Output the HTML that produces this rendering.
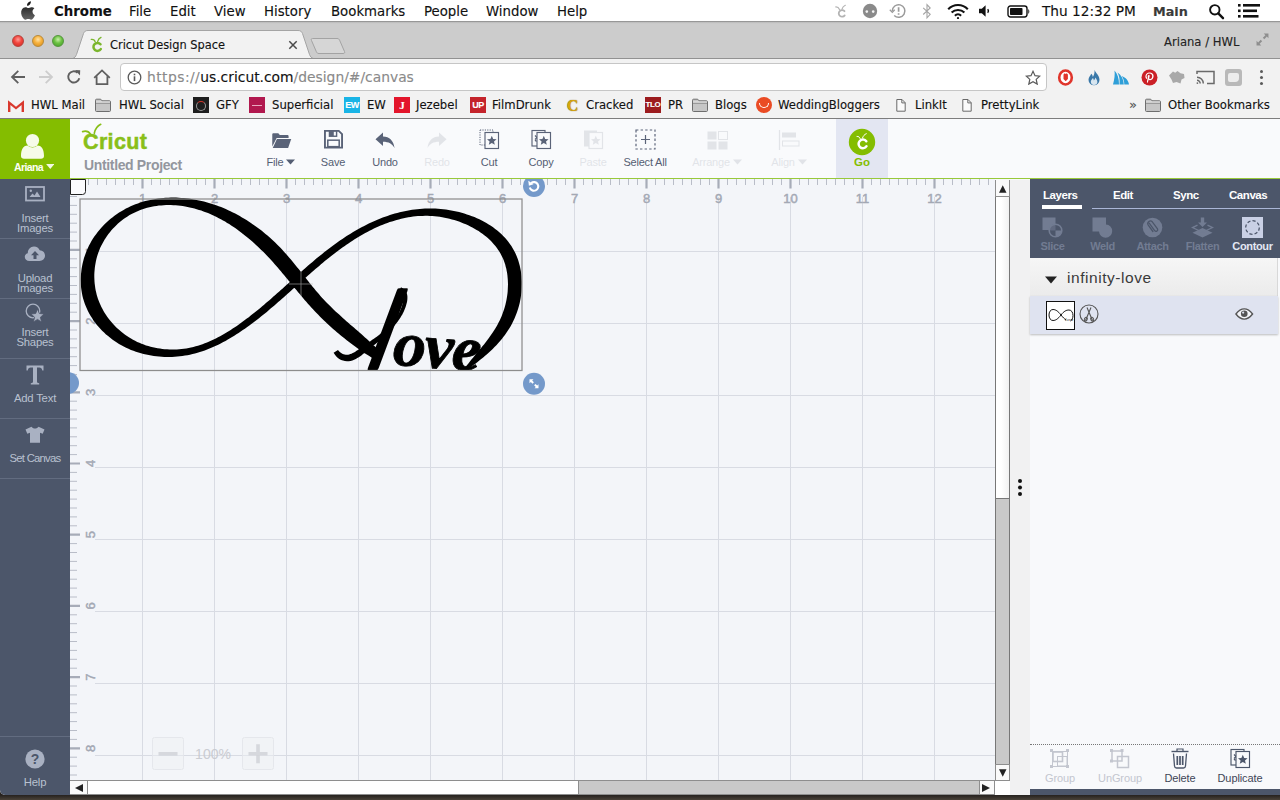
<!DOCTYPE html>
<html lang="en">
<head>
<meta charset="utf-8">
<title>Cricut Design Space</title>
<style>
*{box-sizing:border-box;margin:0;padding:0}
html,body{width:1280px;height:800px;overflow:hidden;background:linear-gradient(#26221f 0,#26221f 795px,#4a4239 800px)}
body{position:relative;font-family:"Liberation Sans",sans-serif;color:#000}
.abs{position:absolute}
.mac{font-family:"DejaVu Sans","Liberation Sans",sans-serif;-webkit-text-stroke:.12px currentColor}
/* ---------- mac menu bar ---------- */
#menubar{position:absolute;left:0;top:0;width:1280px;height:22px;background:#fff;border-bottom:1px solid #979797}
#menubar span{position:absolute;top:3px;font-size:13.300px;line-height:17px;white-space:nowrap;color:#111}
/* ---------- chrome window ---------- */
#tabbar{position:absolute;left:0;top:22px;width:1280px;height:37px;background:#cccccc}
#toolbar{position:absolute;left:0;top:58px;width:1280px;height:60px;background:#f2f2f2;border-top:1px solid #929292}
#urlbox{position:absolute;left:120px;top:4px;width:927px;height:28px;background:#fff;border:1px solid #c6c6c6;border-radius:4px}
.bm{position:absolute;top:38px;font-size:11.650px;line-height:16px;white-space:nowrap;color:#111}
/* ---------- app ---------- */
#app{position:absolute;left:0;top:118px;width:1280px;height:677px;background:#f8f9fb;overflow:hidden;border-top:1px solid #7d7d7d;border-bottom-left-radius:5px}
#side{position:absolute;left:0;top:0;width:70px;height:677px;background:#4c566a;border-bottom-left-radius:5px}
#user{position:absolute;left:0;top:0;width:70px;height:60px;background:#84bd00}
.sitem{position:absolute;left:0;width:70px;text-align:center;color:#b9c1d0;font-size:11.300px;line-height:10px;letter-spacing:-.2px}
.ssep{position:absolute;left:0;width:70px;height:1px;background:#626c80}
#top{position:absolute;left:70px;top:0;width:1210px;height:59px;background:#f9fafc}
#greenline{position:absolute;left:70px;top:59px;width:1210px;height:1px;background:#98c93a}
.tb{position:absolute;top:0;height:60px;text-align:center;color:#555e73;font-size:11px;letter-spacing:-.2px}
.tb .lbl{position:absolute;left:-20px;right:-20px;top:36px;line-height:14px;white-space:nowrap}
.tb.dis{opacity:.14}
#canvas{position:absolute;left:70px;top:60px;width:925px;height:601px;background:#f3f5f9;overflow:hidden}
#panel{position:absolute;left:1030px;top:60px;width:250px;height:617px;background:#f8f9fb}
#phead{position:absolute;left:0;top:0;width:250px;height:79px;background:#4c566a}
</style>
</head>
<body>
<div id="menubar" class="mac">
<svg class="abs" style="left:18px;top:.5px" width="18.500" height="20.500" viewBox="0 0 16 18"><defs><linearGradient id="apg" x1="0" y1="0" x2="0" y2="1"><stop offset="0" stop-color="#111"/><stop offset="1" stop-color="#666"/></linearGradient></defs><path fill="url(#apg)" d="M11.2 0.3c.1 1-.3 2-.9 2.700-.6.700-1.600 1.300-2.500 1.200-.1-1 .4-2 .9-2.600C9.300.9 10.400.4 11.200.3zM14.300 6.300c-.1.100-1.700 1-1.700 3 0 2.400 2.100 3.200 2.100 3.200s-.3 1-1 2c-.6.900-1.300 1.900-2.300 1.900s-1.300-.6-2.500-.6-1.600.6-2.500.6c-1 0-1.700-.9-2.400-1.900C2.700 12.600 2 9.400 3.400 7.200c.7-1.100 1.900-1.800 3.100-1.800 1 0 1.900.7 2.500.7.600 0 1.700-.8 2.900-.7.500 0 1.700.2 2.400.9z"/></svg>
<span style="left:54px;font-weight:bold">Chrome</span>
<span style="left:129px">File</span>
<span style="left:170px">Edit</span>
<span style="left:214px">View</span>
<span style="left:264px">History</span>
<span style="left:331px">Bookmarks</span>
<span style="left:424px">People</span>
<span style="left:486px">Window</span>
<span style="left:557px">Help</span>
<!-- status icons -->
<svg class="abs" style="left:832px;top:3px" width="18" height="16" viewBox="0 0 18 16" fill="none" stroke="#b3b3b3" stroke-width="1.800" stroke-linecap="round"><path d="M12.500 8.200a3.300 3.300 0 1 0 .2 4.200"/><path d="M7.500 6.500C6.800 4.800 5.500 3.800 3.800 3.900" stroke-width="1.200"/><path d="M10 6.200c.5-1.800 1.600-3.200 3.300-3.900" stroke-width="1.200"/></svg>
<svg class="abs" style="left:862px;top:3px" width="16" height="16" viewBox="0 0 16 16"><circle cx="8" cy="8" r="7.200" fill="#8a8a8a"/><circle cx="4.800" cy="8.600" r="1.300" fill="#f4f4f4"/><circle cx="11.200" cy="8.600" r="1.300" fill="#f4f4f4"/></svg>
<svg class="abs" style="left:889px;top:3px" width="18" height="16" viewBox="0 0 18 16" fill="none" stroke="#9a9a9a" stroke-width="1.500"><path d="M3.300 8a6.300 6.300 0 1 1 1.900 4.500"/><path d="M0.800 6.800l2.500 2.600 2.400-2.700" stroke-width="1.300"/><path d="M9.600 4.200v4.600M9.600 10.300v1.500" stroke-width="1.700"/></svg>
<svg class="abs" style="left:922px;top:3px" width="10" height="17" viewBox="0 0 10 17" fill="none" stroke="#a5a5a5" stroke-width="1.100"><path d="M1.200 4.800l7 6.500L5 14.800V1.600l3.200 3.400-7 6.500"/></svg>
<svg class="abs" style="left:947px;top:3px" width="22" height="16" viewBox="0 0 22 16" fill="none" stroke="#111" stroke-width="2.100" stroke-linecap="butt"><path d="M1.200 6.200a13.500 13.500 0 0 1 19.600 0"/><path d="M4.600 9.600a9 9 0 0 1 12.800 0"/><path d="M7.900 12.700a4.400 4.400 0 0 1 6.200 0"/><circle cx="11" cy="15" r="1.100" fill="#111" stroke="none"/></svg>
<svg class="abs" style="left:978px;top:4px" width="14" height="14" viewBox="0 0 14 14"><path fill="#111" d="M1 4.800h2.800L7.600 1.300v11.400L3.800 9.200H1z"/><path d="M9.600 5.200a2.600 2.600 0 0 1 0 3.600" stroke="#111" stroke-width="1.300" fill="none"/></svg>
<svg class="abs" style="left:1007px;top:5px" width="24" height="13" viewBox="0 0 24 13"><rect x="1" y="1" width="19" height="11" rx="2.400" fill="none" stroke="#111" stroke-width="1.400"/><rect x="3" y="3" width="12.500" height="7" rx=".8" fill="#111"/><path d="M21.300 4.300c1.300.3 1.300 4.100 0 4.400z" fill="#111"/></svg>
<span style="left:1042px;font-size:13.700px">Thu 12:32 PM</span>
<span style="left:1153px;font-weight:bold;color:#3a3a3a;font-size:12.800px">Main</span>
<svg class="abs" style="left:1208px;top:3px" width="17" height="17" viewBox="0 0 17 17" fill="none" stroke="#111" stroke-width="1.900"><circle cx="6.800" cy="6.800" r="4.700"/><path d="M10.300 10.300l4.700 4.900" stroke-width="2.400" stroke-linecap="round"/></svg>
<svg class="abs" style="left:1238px;top:4px" width="22" height="14" viewBox="0 0 22 14" fill="#111"><rect x="0" y="0" width="2.600" height="2.600"/><rect x="0" y="5.500" width="2.600" height="2.600"/><rect x="0" y="11" width="2.600" height="2.600"/><rect x="5" y="0" width="17" height="2.600"/><rect x="5" y="5.500" width="14" height="2.600"/><rect x="5" y="11" width="15.500" height="2.600"/></svg>
</div>
<div id="tabbar" class="mac">
<div class="abs" style="left:0;top:0;width:1280px;height:1.500px;background:linear-gradient(#b9b9b9,#cfcfcf)"></div>
<!-- traffic lights -->
<div class="abs" style="left:12px;top:13px;width:12px;height:12px;border-radius:50%;background:radial-gradient(circle at 50% 35%,#ff9c96 0,#f2453d 45%,#c92a24 100%);border:.5px solid #b5433d"></div>
<div class="abs" style="left:32px;top:13px;width:12px;height:12px;border-radius:50%;background:radial-gradient(circle at 50% 35%,#ffe3a6 0,#f7b13c 45%,#d08a1c 100%);border:.5px solid #b98a3a"></div>
<div class="abs" style="left:52px;top:13px;width:12px;height:12px;border-radius:50%;background:radial-gradient(circle at 50% 35%,#c9f0a8 0,#6cc243 45%,#3f9a26 100%);border:.5px solid #55963e"></div>
<!-- active tab -->
<svg class="abs" style="left:66px;top:7px" width="290" height="30" viewBox="0 0 290 30"><path d="M0 30 L6.500 29.500 C9 29 9.500 27.500 10.500 25.500 L17.500 4.500 C18.500 2.300 19.500 1.500 22 1.500 H232 C234.500 1.500 235.500 2.300 236.500 4.500 L243.500 25.500 C244.500 27.500 245 29 247.500 29.500 L254 30 Z" fill="#f2f2f2" stroke="#a4a4a4" stroke-width="1"/><rect x="7" y="29" width="240" height="1.500" fill="#f2f2f2"/>
</svg>
<svg class="abs" style="left:308px;top:15px" width="40" height="19" viewBox="0 0 40 19"><path d="M4.500 1.500 H29 C30.500 1.500 31 2 31.600 3.200 L36.500 14.500 C37 15.800 36.500 16.500 35 16.500 H11 C9.500 16.500 9 16 8.400 14.800 L3.500 3.500 C3 2.200 3.200 1.500 4.500 1.500Z" fill="#d6d6d6" stroke="#a3a3a3" stroke-width="1"/></svg>
<svg class="abs" style="left:89px;top:13px" width="16" height="18" viewBox="0 0 16 18" fill="none" stroke="#7bb62d" stroke-linecap="round"><path d="M11.500 9.300a4 4 0 1 0 .3 4.800" stroke-width="2.500"/><path d="M6.300 7.200C5.800 5.300 4.300 4.200 2.300 4.400" stroke-width="1.300"/><path d="M8.600 6.600c.5-2 1.700-3.400 3.400-4.200" stroke-width="1.300"/></svg>
<span class="abs" style="left:110px;top:14.500px;font-size:11.400px;line-height:16px;white-space:nowrap;color:#111">Cricut Design Space</span>
<svg class="abs" style="left:288px;top:18px" width="10" height="10" viewBox="0 0 10 10" stroke="#4a4a4a" stroke-width="1.500"><path d="M1.300 1.300l7.400 7.400M8.700 1.300L1.300 8.700"/></svg>
<span class="abs" style="left:1164px;top:12px;font-size:11.600px;line-height:16px;white-space:nowrap;color:#222">Ariana / HWL</span>
<svg class="abs" style="left:1254px;top:9px" width="18" height="18" viewBox="0 0 18 18" fill="#8e8e8e"><path d="M10.500 2h5.500v5.500l-1.900-1.900-3 3-1.700-1.700 3-3zM7.500 16H2v-5.500l1.900 1.900 3-3 1.700 1.700-3 3z" transform="scale(.85) translate(1,1)"/></svg>
</div>
<div id="toolbar" class="mac">
<!-- nav -->
<svg class="abs" style="left:10px;top:10px" width="16" height="16" viewBox="0 0 16 16" fill="none" stroke="#5f5f5f" stroke-width="1.800"><path d="M8.300 1.800L2 8l6.300 6.200M2.200 8H15"/></svg>
<svg class="abs" style="left:38px;top:10px" width="16" height="16" viewBox="0 0 16 16" fill="none" stroke="#cdcdcd" stroke-width="1.800"><path d="M7.700 1.800L14 8l-6.300 6.200M13.800 8H1"/></svg>
<svg class="abs" style="left:66px;top:10px" width="16" height="16" viewBox="0 0 16 16" fill="none" stroke="#5f5f5f" stroke-width="1.900"><path d="M13.300 9.200A5.600 5.600 0 1 1 11.600 3.700"/><path d="M9 1l5.200.2-.2 5.200z" fill="#5f5f5f" stroke="none"/></svg>
<svg class="abs" style="left:93px;top:10px" width="18" height="17" viewBox="0 0 18 17" fill="none" stroke="#5f5f5f" stroke-width="1.800"><path d="M1.200 8.800L9 1.400l7.800 7.400"/><path d="M3.600 7.200v8h10.800v-8"/></svg>
<div id="urlbox">
<svg class="abs" style="left:6px;top:6px" width="15" height="15" viewBox="0 0 15 15"><circle cx="7.500" cy="7.500" r="6.300" fill="none" stroke="#5a5a5a" stroke-width="1.300"/><rect x="6.700" y="6.300" width="1.600" height="4.800" fill="#5a5a5a"/><rect x="6.700" y="3.700" width="1.600" height="1.600" fill="#5a5a5a"/></svg>
<span class="abs" style="left:26px;top:4px;font-size:13.850px;line-height:18px;white-space:nowrap;color:#8a8a8a"><span style="letter-spacing:.45px">https://</span><span style="color:#111">us.cricut.com</span>/design/#/canvas</span>
<svg class="abs" style="left:904px;top:6px" width="16" height="15" viewBox="0 0 16 15"><path d="M8 1.300l2 4.400 4.700.5-3.500 3.200 1 4.700L8 11.700 3.800 14.100l1-4.700L1.300 6.200 6 5.700z" fill="none" stroke="#5a5a5a" stroke-width="1.200" stroke-linejoin="miter"/></svg>
</div>
<!-- extensions -->
<svg class="abs" style="left:1057px;top:10px" width="17" height="17" viewBox="0 0 17 17"><ellipse cx="8.500" cy="8.500" rx="6.300" ry="7" fill="#fff" stroke="#e0352b" stroke-width="2.600"/><path d="M6.500 5.500l1.200-1.300 1 .9 1-.9 1.200 1.300v4.500l-2.200 2.300-2.200-2.300z" fill="#e0352b"/></svg>
<svg class="abs" style="left:1087px;top:10px" width="14" height="17" viewBox="0 0 14 17"><path d="M7.500.8C8.500 4 12.500 6.500 12.500 10.800a5.500 5.500 0 0 1-11 0C1.500 8 3.500 6.800 4.200 4.800 5.500 6 5.800 7 5.800 8 7.300 6 7.800 3.200 7.500.8z" fill="#3a78a8"/><path d="M7 16c-2 0-3.200-1.400-3.200-3.200 0-1.600 1.400-2.400 2-3.800.8.800 1 1.600 1 2.400 1-.8 1.400-2 1.400-3 1.200 1.400 2.200 2.800 2.200 4.500C10.400 14.600 9 16 7 16z" fill="#d8e6f0"/></svg>
<svg class="abs" style="left:1112px;top:10px" width="18" height="17" viewBox="0 0 18 17" fill="#2f9fd8"><path d="M1 15.500C2.500 10 3 5.500 2.500 1.500c3 3.500 4.500 8 4.500 14z"/><path d="M7.500 15.500c.5-5-.2-8.500-2-12C9.500 6 11.500 10 11.800 15.500z"/><path d="M12.300 15.500c0-3.500-.8-6-2.500-8.500 4 1.500 6.700 4.500 7.200 8.500z"/></svg>
<svg class="abs" style="left:1141px;top:10px" width="17" height="17" viewBox="0 0 17 17"><circle cx="8.500" cy="8.500" r="8" fill="#cb2027"/><path d="M8.700 3.600c-2.800 0-4.300 1.900-4.300 3.900 0 .9.500 2.100 1.300 2.500.2.100.2 0 .3-.2l.2-.7c0-.1 0-.2-.1-.3-.3-.3-.5-.9-.5-1.500 0-1.400 1.100-2.800 2.900-2.800 1.600 0 2.700 1.100 2.700 2.600 0 1.800-.9 3-2 3-.6 0-1.100-.5-1-1.200.2-.8.500-1.600.5-2.100 0-.5-.3-.9-.8-.9-.7 0-1.200.7-1.200 1.600 0 .6.200 1 .2 1l-.8 3.300c-.2 1 0 2.200 0 2.300 0 .1.100.1.100 0 .1-.1.900-1.100 1.100-2.100l.4-1.600c.2.400.9.800 1.500.8 2 0 3.400-1.800 3.400-4.100 0-2.100-1.700-3.500-3.900-3.500z" fill="#fff"/></svg>
<svg class="abs" style="left:1168px;top:11px" width="17" height="15" viewBox="0 0 17 15"><path d="M1 5.500l4-4 2.200 1.200L9.500 1l3 2.200 3.500.8.500 4-3 1.500-1 4-4-1.500-3.500 1-1.500-3.500z" fill="#a9a9a9"/></svg>
<svg class="abs" style="left:1196px;top:11px" width="19" height="15" viewBox="0 0 19 15" fill="none" stroke="#6a6a6a" stroke-width="1.500"><path d="M1 4V1.500h17v12H11"/><path d="M1 7.200a6.300 6.300 0 0 1 6.300 6.300M1 10.300a3.200 3.200 0 0 1 3.200 3.200"/><circle cx="1.400" cy="13.100" r=".9" fill="#6a6a6a" stroke="none"/></svg>
<div class="abs" style="left:1225px;top:10px;width:17px;height:17px;border-radius:3px;background:#b9b9b9"><div class="abs" style="left:3px;top:4px;width:11px;height:9px;border-radius:2px 2px 4px 2px;background:#ededed"></div></div>
<div class="abs" style="left:1260px;top:11px;width:3px;height:3px;border-radius:50%;background:#5a5a5a;box-shadow:0 6px 0 #5a5a5a,0 12px 0 #5a5a5a"></div>
<!-- bookmarks -->
<svg class="abs" style="left:8px;top:40px" width="16" height="13" viewBox="0 0 16 13"><path d="M0 1h16v12h-16z" fill="#f4f4f4"/><path d="M0 1.200L8 7.800l8-6.600V13h-2.400V5.900L8 10.500 2.400 5.900V13H0z" fill="#d9392e"/></svg>
<span class="bm" style="left:31px">HWL Mail</span><svg class="abs" style="left:95px;top:39px" width="16" height="14" viewBox="0 0 16 14"><path d="M.5 2.200c0-.6.400-1 1-1h4.200l1.300 1.600h7.500c.6 0 1 .4 1 1v8.700c0 .6-.4 1-1 1h-13c-.6 0-1-.4-1-1z" fill="#c6c6c6" stroke="#6e6e6e" stroke-width="1"/><path d="M.5 5h15" stroke="#6e6e6e" stroke-width="1" fill="none"/><path d="M1 3.600h14v1h-14z" fill="#f0f0f0"/></svg><span class="bm" style="left:119px">HWL Social</span>
<div class="abs" style="left:193px;top:38px;width:16px;height:16px;background:#1e1e1e"><div class="abs" style="left:3px;top:4px;width:10px;height:10px;border-radius:50%;border:1.500px solid #9a9a9a;border-top-color:#d3362c"></div></div>
<span class="bm" style="left:216px">GFY</span>
<div class="abs" style="left:249px;top:38px;width:16px;height:16px;background:#b1184e"><div class="abs" style="left:3px;top:8px;width:10px;height:1px;background:#e9a9c0"></div></div>
<span class="bm" style="left:272px">Superficial</span>
<div class="abs" style="left:344px;top:38px;width:16px;height:16px;background:#19b4e6;color:#fff;font:bold 9px/16px 'Liberation Sans',sans-serif;text-align:center;letter-spacing:-.5px">EW</div>
<span class="bm" style="left:367px">EW</span>
<div class="abs" style="left:394px;top:38px;width:16px;height:16px;background:#e3152b;color:#fff;font:bold 11px/16px 'Liberation Serif',serif;text-align:center">J</div>
<span class="bm" style="left:416px">Jezebel</span>
<div class="abs" style="left:470px;top:38px;width:16px;height:16px;background:#c4242b;color:#fff;font:bold 9px/16px 'Liberation Sans',sans-serif;text-align:center;letter-spacing:-.5px">UP</div>
<span class="bm" style="left:492px">FilmDrunk</span>
<div class="abs" style="left:566px;top:38px;width:13px;height:17px;color:#d9a60c;font:bold 16px/17px 'Liberation Serif',serif;text-align:center;text-shadow:0 0 1px #5a4300">C</div>
<span class="bm" style="left:586px">Cracked</span>
<div class="abs" style="left:645px;top:38px;width:16px;height:16px;background:#9c1c1f;color:#fff;font:bold 8px/16px 'Liberation Sans',sans-serif;text-align:center;letter-spacing:-.3px">TLO</div>
<span class="bm" style="left:668px">PR</span><svg class="abs" style="left:692px;top:39px" width="16" height="14" viewBox="0 0 16 14"><path d="M.5 2.200c0-.6.400-1 1-1h4.200l1.300 1.600h7.500c.6 0 1 .4 1 1v8.700c0 .6-.4 1-1 1h-13c-.6 0-1-.4-1-1z" fill="#c6c6c6" stroke="#6e6e6e" stroke-width="1"/><path d="M.5 5h15" stroke="#6e6e6e" stroke-width="1" fill="none"/><path d="M1 3.600h14v1h-14z" fill="#f0f0f0"/></svg><span class="bm" style="left:715px">Blogs</span>
<div class="abs" style="left:756px;top:38px;width:16px;height:16px;border-radius:50%;background:#ea4b24"><div class="abs" style="left:3px;top:6px;width:10px;height:5px;border:1.500px solid #fff;border-top:none;border-radius:0 0 5px 5px"></div></div>
<span class="bm" style="left:778px">WeddingBloggers</span><svg class="abs" style="left:896px;top:39px" width="10" height="14" viewBox="0 0 10 14"><path d="M.8 1.500h5.200l3.200 3.200v8.500H.8z" fill="#fafafa" stroke="#6a6a6a" stroke-width="1"/><path d="M5.800 1.500v3.400h3.400" fill="none" stroke="#6a6a6a" stroke-width="1"/></svg><span class="bm" style="left:915px">LinkIt</span><svg class="abs" style="left:962px;top:39px" width="10" height="14" viewBox="0 0 10 14"><path d="M.8 1.500h5.200l3.200 3.200v8.500H.8z" fill="#fafafa" stroke="#6a6a6a" stroke-width="1"/><path d="M5.800 1.500v3.400h3.400" fill="none" stroke="#6a6a6a" stroke-width="1"/></svg><span class="bm" style="left:981px">PrettyLink</span>
<span class="bm" style="left:1129px;color:#555;font-size:13px;top:38px">»</span>
<svg class="abs" style="left:1145px;top:39px" width="16" height="14" viewBox="0 0 16 14"><path d="M.5 2.200c0-.6.400-1 1-1h4.200l1.300 1.600h7.500c.6 0 1 .4 1 1v8.700c0 .6-.4 1-1 1h-13c-.6 0-1-.4-1-1z" fill="#c6c6c6" stroke="#6e6e6e" stroke-width="1"/><path d="M.5 5h15" stroke="#6e6e6e" stroke-width="1" fill="none"/><path d="M1 3.600h14v1h-14z" fill="#f0f0f0"/></svg><span class="bm" style="left:1168px">Other Bookmarks</span>
</div>
<div id="app">
  <div id="side"><div id="user">
<svg class="abs" style="left:19px;top:13px" width="28" height="28" viewBox="0 0 28 28" fill="#f6fbe8"><circle cx="13.500" cy="8.500" r="6.600"/><path d="M2 24c0-6 2-10.500 6.500-10.500 1.500 1.300 3.200 2 5 2s3.500-.7 5-2C23 13.500 25 18 25 24c0 1.800-1.200 2.800-3 2.800H5c-1.800 0-3-1-3-2.800z"/></svg>
<div class="abs" style="left:14px;top:41.500px;font-size:10.500px;line-height:12px;font-weight:bold;color:#fcfef4;letter-spacing:-.6px">Ariana</div>
<svg class="abs" style="left:45.500px;top:45px" width="8.500" height="5.500" viewBox="0 0 9 6"><path d="M0 0h9L4.500 5.500z" fill="#f3f9e2"/></svg>
</div>
<svg class="abs" style="left:25px;top:67px" width="20" height="16" viewBox="0 0 20 16"><rect x="1" y="1" width="18" height="13.500" fill="none" stroke="#a9b1c2" stroke-width="1.800"/><path d="M4.500 11l3-3.500 2 2 2.500-4 3.500 5.500z" fill="#a9b1c2"/><circle cx="5.800" cy="4.800" r="1.200" fill="#a9b1c2"/></svg>
<div class="sitem" style="top:93.5px">Insert<br>Images</div>
<div class="ssep" style="top:119px"></div>
<svg class="abs" style="left:24px;top:126px" width="22" height="17" viewBox="0 0 22 17"><path d="M5.500 16C2.500 16 .8 14.200 .8 12c0-2 1.300-3.400 3-3.800C3.800 4.500 6.300 1.500 10 1.500c2.800 0 4.800 1.500 5.700 3.800 3 .2 5.300 2.300 5.300 5.300 0 3.200-2.400 5.400-5.500 5.400z" fill="#a9b1c2"/><path d="M11 6l4 4.300h-2.500V14h-3v-3.700H7z" fill="#4c566a"/></svg>
<div class="sitem" style="top:153.5px">Upload<br>Images</div>
<div class="ssep" style="top:179px"></div>
<svg class="abs" style="left:23px;top:183px" width="24" height="24" viewBox="0 0 24 24"><circle cx="10" cy="9" r="6.800" fill="none" stroke="#a9b1c2" stroke-width="1.300"/><path d="M14.500 7l1.800 4.500 4.800.5-3.700 3.200 1.200 4.800-4.100-2.600-4.100 2.600 1.200-4.800L7.900 12l4.800-.5z" fill="#a9b1c2" stroke="#4c566a" stroke-width=".8"/></svg>
<div class="sitem" style="top:207.5px">Insert<br>Shapes</div>
<div class="ssep" style="top:239px"></div>
<svg class="abs" style="left:26px;top:246px" width="18" height="20" viewBox="0 0 18 20" fill="#a9b1c2"><path d="M.5.500h17v5h-1.200c-.3-2-1.300-3-3-3h-2.300v14c0 1.200.6 1.700 2.200 1.700v1.300H4.800v-1.300c1.600 0 2.200-.5 2.200-1.700v-14H4.700c-1.700 0-2.700 1-3 3H.5z"/></svg>
<div class="sitem" style="top:273.5px">Add Text</div>
<div class="ssep" style="top:299px"></div>
<svg class="abs" style="left:25px;top:307px" width="20" height="18" viewBox="0 0 20 18" fill="#a9b1c2"><path d="M6.500.8c.8 1.200 2 1.800 3.500 1.800s2.700-.6 3.500-1.800l6 2.700-1.800 4.200-2.700-.9v10H5v-10l-2.700.9L.5 3.500z"/></svg>
<div class="sitem" style="top:333.5px;letter-spacing:-.75px">Set Canvas</div>
<div class="ssep" style="top:359px"></div>
<div class="ssep" style="top:617px"></div>
<svg class="abs" style="left:25px;top:629.500px" width="20" height="20" viewBox="0 0 20 20"><circle cx="10" cy="10" r="9.600" fill="#a9b1c2"/><text x="10" y="15" text-anchor="middle" font-family="'Liberation Sans',sans-serif" font-weight="bold" font-size="14" fill="#4c566a">?</text></svg>
<div class="sitem" style="top:658px">Help</div>
</div>
  <div id="top">
<svg class="abs" style="left:9px;top:1.700px" width="90" height="34" viewBox="0 0 90 34"><path d="M11.500 13.200C9.800 10.500 7 9.600 3.600 10.600" fill="none" stroke="#89bf19" stroke-width="1.700" stroke-linecap="round"/><path d="M15.300 12.200C16.200 8.200 18.300 5 21.700 3.300" fill="none" stroke="#89bf19" stroke-width="1.700" stroke-linecap="round"/><text x="4" y="28.300" font-family="'Liberation Sans',sans-serif" font-weight="bold" font-size="21.500" letter-spacing=".35" fill="#89bf19" stroke="#89bf19" stroke-width=".5">Cricut</text></svg>
<div class="abs" style="left:14px;top:36.500px;font-size:14px;line-height:18px;font-weight:bold;color:#93969e;white-space:nowrap;letter-spacing:-.35px">Untitled Project</div>
<div class="tb " style="left:185px;width:52px"><svg class="abs" style="left:16px;top:12.500px" width="21" height="17.500" viewBox="0 0 21 18"><path d="M1 2.500c0-.8.500-1.300 1.300-1.300h4.900l1.600 2h7.700c.8 0 1.300.5 1.300 1.300v1.700H5.500L1 15z" fill="#5a6378"/><path d="M5.800 7.200h14.700l-3.200 9.300H1.500z" fill="#5a6378"/></svg><div class="lbl">File<svg width="9" height="6" viewBox="0 0 9 6" style="margin-left:3px;vertical-align:1px"><path d="M0 .5h9L4.500 5.500z" fill="currentColor"/></svg></div></div>
<div class="tb " style="left:237px;width:52px"><svg class="abs" style="left:16.500px;top:11px" width="19" height="18.500" viewBox="0 0 20 20" preserveAspectRatio="none"><path d="M1 1h14.500L19 4.500V19H1z" fill="none" stroke="#5a6378" stroke-width="2"/><rect x="5" y="1" width="9" height="6.500" fill="#5a6378"/><rect x="10.300" y="2" width="2.200" height="4" fill="#f9fafc"/><rect x="4" y="11" width="12" height="7" fill="none" stroke="#5a6378" stroke-width="1.600"/></svg><div class="lbl">Save</div></div>
<div class="tb " style="left:289px;width:52px"><svg class="abs" style="left:16px;top:13px" width="20" height="17" viewBox="0 0 20 17"><path d="M8 .5v4c6.500.3 10.500 4 11.500 11.500-2.300-4.300-5.700-6.300-11.500-6.300v4.300L.5 7.200z" fill="#5a6378"/></svg><div class="lbl">Undo</div></div>
<div class="tb dis" style="left:341px;width:52px"><svg class="abs" style="left:16px;top:13px" width="20" height="17" viewBox="0 0 20 17"><path d="M12 .5v4C5.500 4.800 1.500 8.500.5 16c2.300-4.300 5.700-6.300 11.500-6.300v4.300l7.500-6.800z" fill="#5a6378"/></svg><div class="lbl">Redo</div></div>
<div class="tb " style="left:393px;width:52px"><svg class="abs" style="left:16px;top:10px" width="21" height="21" viewBox="0 0 21 21"><rect x="1" y="1" width="13" height="15" fill="none" stroke="#5a6378" stroke-width="1" stroke-dasharray="1.200 1.200"/><rect x="6" y="3.500" width="13.500" height="16" fill="#f9fafc" stroke="#5a6378" stroke-width="1.150"/><path d="M12.800 6.800l1.400 3.100 3.400.3-2.600 2.200.8 3.300-3-1.800-3 1.800.8-3.300L8 10.200l3.400-.3z" fill="#5a6378"/></svg><div class="lbl">Cut</div></div>
<div class="tb " style="left:445px;width:52px"><svg class="abs" style="left:16px;top:10px" width="21" height="21" viewBox="0 0 21 21"><rect x="1" y="1.500" width="13" height="15.500" fill="#f9fafc" stroke="#5a6378" stroke-width="1.150"/><path d="M4 6.500l2 2-2 2M4 11l1.500 1.500" fill="none" stroke="#5a6378" stroke-width="1.200"/><rect x="6" y="3.500" width="13.500" height="16" fill="#f9fafc" stroke="#5a6378" stroke-width="1.150"/><path d="M12.800 6.800l1.400 3.100 3.400.3-2.600 2.200.8 3.300-3-1.800-3 1.800.8-3.300L8 10.200l3.400-.3z" fill="#5a6378"/></svg><div class="lbl">Copy</div></div>
<div class="tb dis" style="left:497px;width:52px"><svg class="abs" style="left:16px;top:10px" width="21" height="21" viewBox="0 0 21 21"><rect x="1" y="1.500" width="13" height="16" fill="#5a6378"/><rect x="6" y="3.500" width="13.500" height="16" fill="#f9fafc" stroke="#5a6378" stroke-width="1.150"/><path d="M12.800 6.800l1.400 3.100 3.400.3-2.600 2.200.8 3.300-3-1.800-3 1.800.8-3.300L8 10.200l3.400-.3z" fill="#5a6378"/></svg><div class="lbl">Paste</div></div>
<div class="tb " style="left:549px;width:52px"><svg class="abs" style="left:16px;top:10px" width="21" height="21" viewBox="0 0 21 21"><rect x="1" y="1" width="19" height="19" fill="none" stroke="#5a6378" stroke-width="1.200" stroke-dasharray="2.400 2.200"/><path d="M10.500 6v9M6 10.500h9" stroke="#5a6378" stroke-width="1.200"/></svg><div class="lbl">Select All</div></div>
<div class="tb dis" style="left:621px;width:52px"><svg class="abs" style="left:16px;top:12px" width="21" height="19" viewBox="0 0 21 19"><rect x=".5" y=".5" width="9" height="8" fill="#5a6378"/><rect x="11.500" y=".5" width="9" height="8" fill="none" stroke="#5a6378"/><rect x=".5" y="10.500" width="9" height="8" fill="#5a6378"/><rect x="11.500" y="10.500" width="9" height="8" fill="#5a6378"/></svg><div class="lbl">Arrange<svg width="9" height="6" viewBox="0 0 9 6" style="margin-left:3px;vertical-align:1px"><path d="M0 .5h9L4.500 5.500z" fill="currentColor"/></svg></div></div>
<div class="tb dis" style="left:693px;width:52px"><svg class="abs" style="left:15px;top:11px" width="22" height="20" viewBox="0 0 22 20"><path d="M1.500 0v20" stroke="#5a6378" stroke-width="1.200"/><rect x="4" y="2.500" width="14" height="5" fill="#5a6378"/><rect x="4.500" y="11" width="16.500" height="5" fill="none" stroke="#5a6378"/></svg><div class="lbl">Align<svg width="9" height="6" viewBox="0 0 9 6" style="margin-left:3px;vertical-align:1px"><path d="M0 .5h9L4.500 5.500z" fill="currentColor"/></svg></div></div>
<div class="abs" style="left:766px;top:0;width:52px;height:60px;background:#e3e6f2"></div>
<svg class="abs" style="left:778px;top:9px" width="28" height="28" viewBox="0 0 28 28"><circle cx="14" cy="14" r="13.200" fill="#84bd00"/><g fill="none" stroke="#fff" stroke-linecap="round"><path d="M18.300 13.300a4.300 4.300 0 1 0 .2 4.900" stroke-width="2.500"/><path d="M12.200 10.600c-.5-1.500-1.600-2.300-3.200-2.200" stroke-width="1"/><path d="M14.500 10c.6-2 1.800-3.500 3.800-4.300" stroke-width="1"/></g></svg>
<div class="abs" style="left:766px;top:36px;width:52px;text-align:center;font-size:11.500px;line-height:14px;font-weight:bold;color:#84bd00">Go</div>
</div>
  <div id="greenline"></div>
  <div id="canvas"><!--CANVAS_START-->
<svg class="abs" style="left:0;top:0" width="925" height="601" viewBox="0 0 925 601" font-family="'Liberation Sans',sans-serif">
<path d="M72.5 18V601M144.5 18V601M216.5 18V601M288.5 18V601M360.5 18V601M432.5 18V601M504.5 18V601M576.5 18V601M648.5 18V601M720.5 18V601M792.5 18V601M864.5 18V601M25 72.5H925M25 144.5H925M25 216.5H925M25 288.5H925M25 360.5H925M25 432.5H925M25 504.5H925M25 576.5H925" stroke="#d8dbe3" stroke-width="1" fill="none"/>
<path d="M18.5 0V6M27.5 0V6M36.5 0V6M45.5 0V6M54.5 0V6M63.5 0V6M81.5 0V6M90.5 0V6M99.5 0V6M108.5 0V6M117.5 0V6M126.5 0V6M135.5 0V6M153.5 0V6M162.5 0V6M171.5 0V6M180.5 0V6M189.5 0V6M198.5 0V6M207.5 0V6M225.5 0V6M234.5 0V6M243.5 0V6M252.5 0V6M261.5 0V6M270.5 0V6M279.5 0V6M297.5 0V6M306.5 0V6M315.5 0V6M324.5 0V6M333.5 0V6M342.5 0V6M351.5 0V6M369.5 0V6M378.5 0V6M387.5 0V6M396.5 0V6M405.5 0V6M414.5 0V6M423.5 0V6M441.5 0V6M450.5 0V6M459.5 0V6M468.5 0V6M477.5 0V6M486.5 0V6M495.5 0V6M513.5 0V6M522.5 0V6M531.5 0V6M540.5 0V6M549.5 0V6M558.5 0V6M567.5 0V6M585.5 0V6M594.5 0V6M603.5 0V6M612.5 0V6M621.5 0V6M630.5 0V6M639.5 0V6M657.5 0V6M666.5 0V6M675.5 0V6M684.5 0V6M693.5 0V6M702.5 0V6M711.5 0V6M729.5 0V6M738.5 0V6M747.5 0V6M756.5 0V6M765.5 0V6M774.5 0V6M783.5 0V6M801.5 0V6M810.5 0V6M819.5 0V6M828.5 0V6M837.5 0V6M846.5 0V6M855.5 0V6M873.5 0V6M882.5 0V6M891.5 0V6M900.5 0V6M909.5 0V6M918.5 0V6" stroke="#b9bdc8" stroke-width="1" fill="none"/>
<path d="M72.5 0V9.500M144.5 0V9.500M216.5 0V9.500M288.5 0V9.500M360.5 0V9.500M432.5 0V9.500M504.5 0V9.500M576.5 0V9.500M648.5 0V9.500M720.5 0V9.500M792.5 0V9.500M864.5 0V9.500" stroke="#a7acb8" stroke-width="2.200" fill="none"/>
<path d="M0 17.5H7M0 26.4H7M0 35.3H7M0 44.2H7M0 53.1H7M0 62.0H7M0 79.8H7M0 88.7H7M0 97.6H7M0 106.5H7M0 115.4H7M0 124.3H7M0 133.2H7M0 151.0H7M0 159.9H7M0 168.8H7M0 177.7H7M0 186.6H7M0 195.5H7M0 204.4H7M0 222.2H7M0 231.1H7M0 240.0H7M0 248.9H7M0 257.8H7M0 266.7H7M0 275.6H7M0 293.4H7M0 302.3H7M0 311.2H7M0 320.1H7M0 329.0H7M0 337.9H7M0 346.8H7M0 364.6H7M0 373.5H7M0 382.4H7M0 391.3H7M0 400.2H7M0 409.1H7M0 418.0H7M0 435.8H7M0 444.7H7M0 453.6H7M0 462.5H7M0 471.4H7M0 480.3H7M0 489.2H7M0 507.0H7M0 515.9H7M0 524.8H7M0 533.7H7M0 542.6H7M0 551.5H7M0 560.4H7M0 578.2H7M0 587.1H7M0 596.0H7" stroke="#b9bdc8" stroke-width="1" fill="none"/>
<path d="M0 70.9H10M0 142.1H10M0 213.3H10M0 284.5H10M0 355.7H10M0 426.9H10M0 498.1H10M0 569.3H10" stroke="#a7acb8" stroke-width="2.200" fill="none"/>
<g font-size="13" fill="#a3a8b4" stroke="#a3a8b4" stroke-width=".45"><text x="72.5" y="24" text-anchor="middle">1</text><text x="144.5" y="24" text-anchor="middle">2</text><text x="216.5" y="24" text-anchor="middle">3</text><text x="288.5" y="24" text-anchor="middle">4</text><text x="360.5" y="24" text-anchor="middle">5</text><text x="432.5" y="24" text-anchor="middle">6</text><text x="504.5" y="24" text-anchor="middle">7</text><text x="576.5" y="24" text-anchor="middle">8</text><text x="648.5" y="24" text-anchor="middle">9</text><text x="720.5" y="24" text-anchor="middle">10</text><text x="792.5" y="24" text-anchor="middle">11</text><text x="864.5" y="24" text-anchor="middle">12</text><text transform="translate(24.500 70.9) rotate(-90)" text-anchor="middle">1</text><text transform="translate(24.500 142.1) rotate(-90)" text-anchor="middle">2</text><text transform="translate(24.500 213.3) rotate(-90)" text-anchor="middle">3</text><text transform="translate(24.500 284.5) rotate(-90)" text-anchor="middle">4</text><text transform="translate(24.500 355.7) rotate(-90)" text-anchor="middle">5</text><text transform="translate(24.500 426.9) rotate(-90)" text-anchor="middle">6</text><text transform="translate(24.500 498.1) rotate(-90)" text-anchor="middle">7</text><text transform="translate(24.500 569.3) rotate(-90)" text-anchor="middle">8</text></g>
<g transform="translate(0 1)">
<path d="M311.4 172.7L309.6 171.0L307.9 169.2L306.1 167.5L304.2 165.8L302.4 164.1L300.6 162.4L298.7 160.7L296.9 159.0L295.0 157.4L293.2 155.7L291.3 154.1L289.5 152.5L287.6 150.8L285.7 149.2L283.9 147.6L282.0 146.0L280.1 144.4L278.3 142.8L276.4 141.2L274.6 139.5L272.8 137.9L271.0 136.3L269.2 134.6L267.4 133.0L265.6 131.4L263.8 129.7L262.1 128.0L260.4 126.3L258.6 124.6L257.0 122.9L255.3 121.2L253.7 119.5L252.0 117.7L250.4 115.9L248.9 114.1L247.3 112.3L245.7 110.4L244.2 108.6L242.6 106.7L241.1 104.8L239.6 102.9L238.1 101.0L236.5 99.0L235.0 97.1L233.5 95.2L231.9 93.2L230.4 91.3L228.9 89.3L227.3 87.4L225.7 85.4L224.1 83.5L222.5 81.5L220.9 79.6L219.3 77.7L217.6 75.7L215.9 73.8L214.2 71.9L212.5 70.0L210.7 68.1L208.9 66.3L207.1 64.4L205.2 62.6L203.3 60.8L201.4 59.1L199.5 57.3L197.5 55.6L195.5 53.9L193.5 52.3L191.5 50.6L189.4 49.0L187.3 47.5L185.2 45.9L183.0 44.4L180.9 42.9L178.7 41.5L176.5 40.1L174.3 38.7L172.0 37.4L169.8 36.1L167.5 34.8L165.2 33.6L162.9 32.4L160.5 31.3L158.2 30.2L155.8 29.1L153.5 28.1L151.1 27.1L148.7 26.2L146.2 25.3L143.8 24.5L141.4 23.7L138.9 22.9L136.4 22.2L134.0 21.6L131.5 20.9L129.0 20.4L126.5 19.9L123.9 19.4L121.4 19.0L118.9 18.6L116.3 18.3L113.8 18.1L111.2 17.9L108.6 17.7L106.1 17.6L103.5 17.6L100.9 17.6L98.3 17.7L95.7 17.8L93.2 18.0L90.6 18.3L88.0 18.6L85.4 19.0L82.9 19.4L80.4 19.9L77.8 20.5L75.3 21.1L72.8 21.8L70.3 22.6L67.9 23.4L65.4 24.3L63.0 25.3L60.6 26.3L58.3 27.4L55.9 28.6L53.6 29.9L51.4 31.2L49.1 32.6L47.0 34.1L44.8 35.6L42.7 37.2L40.6 38.8L38.6 40.5L36.7 42.3L34.8 44.1L32.9 46.0L31.1 48.0L29.4 50.0L27.7 52.0L26.1 54.2L24.5 56.3L23.0 58.6L21.6 60.8L20.3 63.2L19.0 65.6L17.9 68.0L16.8 70.5L15.8 73.0L14.9 75.5L14.0 78.1L13.3 80.7L12.6 83.4L12.1 86.0L11.6 88.7L11.3 91.4L11.0 94.1L10.8 96.8L10.7 99.5L10.8 102.2L10.9 105.0L11.1 107.7L11.5 110.4L11.9 113.1L12.4 115.7L13.1 118.4L13.9 121.0L14.7 123.6L15.7 126.1L16.8 128.6L17.9 131.1L19.2 133.5L20.5 135.8L22.0 138.1L23.5 140.4L25.1 142.5L26.7 144.7L28.5 146.7L30.3 148.7L32.1 150.7L34.1 152.6L36.0 154.4L38.1 156.1L40.2 157.8L42.3 159.4L44.5 161.0L46.8 162.5L49.0 163.9L51.4 165.2L53.7 166.5L56.1 167.7L58.5 168.8L61.0 169.9L63.4 170.8L65.9 171.7L68.4 172.6L71.0 173.3L73.5 174.0L76.1 174.6L78.7 175.1L81.2 175.6L83.8 176.0L86.4 176.3L89.0 176.6L91.7 176.8L94.3 176.9L96.9 177.0L99.5 177.0L102.1 176.9L104.7 176.8L107.3 176.6L109.8 176.3L112.4 176.0L115.0 175.6L117.5 175.2L120.0 174.7L122.5 174.1L125.0 173.5L127.5 172.8L129.9 172.1L132.4 171.3L134.8 170.4L137.1 169.5L139.5 168.6L141.9 167.6L144.2 166.6L146.5 165.5L148.8 164.4L151.1 163.3L153.3 162.1L155.5 160.9L157.8 159.6L160.0 158.3L162.1 157.0L164.3 155.7L166.4 154.3L168.6 153.0L170.7 151.6L172.8 150.1L174.9 148.7L176.9 147.2L179.0 145.8L181.0 144.3L183.0 142.8L185.0 141.2L187.0 139.7L189.0 138.2L191.0 136.6L192.9 135.0L194.9 133.4L196.8 131.9L198.7 130.2L200.6 128.6L202.5 127.0L204.4 125.4L206.3 123.8L208.2 122.1L210.1 120.5L212.0 118.8L213.8 117.2L215.7 115.5L217.6 113.8L219.4 112.2L221.3 110.5L223.1 108.8L225.0 107.2L226.8 105.5L228.7 103.9L230.5 102.2L232.4 100.5L234.2 98.9L236.1 97.2L238.0 95.6L239.8 93.9L241.7 92.3L243.5 90.7L245.4 89.1L247.3 87.5L249.2 85.9L251.0 84.3L252.9 82.7L254.8 81.1L256.8 79.6L258.7 78.0L260.6 76.5L262.5 75.0L264.5 73.5L266.4 72.0L268.4 70.5L270.4 69.0L272.4 67.6L274.4 66.2L276.4 64.8L278.4 63.4L280.5 62.0L282.5 60.7L284.6 59.3L286.7 58.0L288.8 56.8L290.9 55.5L293.1 54.3L295.2 53.1L297.4 51.9L299.5 50.8L301.7 49.7L303.9 48.6L306.1 47.6L308.4 46.6L310.6 45.6L312.8 44.7L315.1 43.8L317.4 43.0L319.7 42.1L322.0 41.4L324.3 40.7L326.6 40.0L328.9 39.4L331.2 38.8L333.6 38.2L335.9 37.8L338.3 37.3L340.7 36.9L343.1 36.6L345.5 36.3L347.9 36.1L350.3 36.0L352.7 35.9L355.1 35.8L357.5 35.8L360.0 35.9L362.4 36.1L364.8 36.3L367.3 36.5L369.7 36.8L372.2 37.2L374.6 37.7L377.1 38.2L379.5 38.8L381.9 39.4L384.3 40.1L386.7 40.8L389.0 41.6L391.3 42.5L393.6 43.4L395.9 44.3L398.1 45.3L400.3 46.4L402.4 47.5L404.5 48.7L406.6 49.9L408.6 51.1L410.5 52.4L412.4 53.8L414.3 55.2L416.0 56.6L417.8 58.1L419.4 59.6L421.0 61.1L422.5 62.7L424.0 64.4L425.4 66.0L426.7 67.7L427.9 69.5L429.1 71.2L430.2 73.0L431.2 74.9L432.1 76.7L433.0 78.6L433.8 80.6L434.5 82.6L435.2 84.6L435.7 86.7L436.3 88.8L436.7 90.9L437.1 93.1L437.4 95.2L437.6 97.5L437.8 99.7L437.9 101.9L438.0 104.2L437.9 106.5L437.8 108.7L437.7 111.0L437.5 113.3L437.2 115.6L436.8 117.9L436.4 120.2L435.9 122.5L435.4 124.8L434.8 127.0L434.1 129.3L433.3 131.5L432.5 133.7L431.7 135.9L430.8 138.1L429.8 140.2L428.7 142.3L427.6 144.4L426.5 146.5L425.3 148.5L424.0 150.5L422.7 152.6L421.3 154.6L419.9 156.6L418.5 158.5L417.0 160.5L415.5 162.4L414.0 164.4L412.4 166.3L410.9 168.2L409.3 170.1L407.7 172.0L406.1 173.9L404.6 175.8L403.0 177.7L401.4 179.6L399.9 181.5L398.4 183.4L396.9 185.3L395.5 187.1L397.7 189.4L399.6 188.0L401.5 186.6L403.4 185.1L405.4 183.7L407.3 182.2L409.3 180.6L411.2 179.1L413.2 177.5L415.1 175.8L417.0 174.2L418.9 172.4L420.8 170.7L422.7 168.9L424.5 167.0L426.4 165.2L428.1 163.2L429.9 161.3L431.6 159.2L433.3 157.1L434.9 155.0L436.4 152.8L437.9 150.6L439.4 148.3L440.8 146.0L442.1 143.6L443.3 141.1L444.5 138.6L445.5 136.1L446.5 133.6L447.4 131.0L448.2 128.4L449.0 125.7L449.7 123.1L450.2 120.4L450.7 117.7L451.1 115.0L451.5 112.3L451.7 109.6L451.8 106.9L451.9 104.2L451.9 101.5L451.7 98.8L451.5 96.1L451.2 93.4L450.8 90.8L450.3 88.2L449.7 85.6L449.0 83.0L448.3 80.4L447.4 77.9L446.4 75.5L445.3 73.0L444.1 70.7L442.8 68.4L441.4 66.1L439.9 63.9L438.3 61.8L436.7 59.8L435.0 57.8L433.2 55.9L431.3 54.0L429.3 52.3L427.3 50.6L425.2 48.9L423.1 47.3L420.9 45.8L418.7 44.4L416.4 43.0L414.1 41.7L411.8 40.5L409.4 39.3L406.9 38.2L404.5 37.1L402.0 36.2L399.4 35.2L396.9 34.4L394.3 33.6L391.7 32.8L389.1 32.1L386.5 31.5L383.9 30.9L381.3 30.4L378.6 30.0L376.0 29.6L373.3 29.3L370.7 29.0L368.0 28.8L365.4 28.6L362.7 28.5L360.1 28.5L357.5 28.5L354.9 28.6L352.3 28.8L349.8 28.9L347.2 29.2L344.7 29.5L342.1 29.8L339.6 30.2L337.1 30.7L334.6 31.2L332.1 31.7L329.7 32.3L327.2 32.9L324.8 33.6L322.3 34.3L319.9 35.1L317.5 35.9L315.1 36.7L312.7 37.6L310.4 38.5L308.0 39.5L305.7 40.5L303.4 41.5L301.1 42.6L298.8 43.6L296.5 44.8L294.2 45.9L292.0 47.1L289.7 48.3L287.5 49.6L285.3 50.8L283.1 52.1L280.9 53.4L278.8 54.8L276.6 56.1L274.5 57.5L272.4 58.9L270.3 60.3L268.2 61.8L266.2 63.2L264.1 64.7L262.1 66.2L260.1 67.7L258.1 69.2L256.1 70.8L254.1 72.3L252.2 73.9L250.2 75.5L248.3 77.0L246.3 78.6L244.4 80.3L242.5 81.9L240.6 83.5L238.7 85.1L236.8 86.8L234.9 88.4L233.1 90.1L231.2 91.7L229.3 93.4L227.5 95.0L225.6 96.7L223.8 98.4L221.9 100.0L220.1 101.7L218.2 103.4L216.4 105.0L214.5 106.7L212.7 108.4L210.8 110.0L209.0 111.7L207.1 113.3L205.3 115.0L203.4 116.6L201.6 118.3L199.7 119.9L197.8 121.5L195.9 123.1L194.1 124.7L192.2 126.3L190.3 127.9L188.4 129.5L186.5 131.0L184.6 132.6L182.6 134.1L180.7 135.6L178.8 137.2L176.8 138.6L174.8 140.1L172.8 141.6L170.8 143.0L168.8 144.4L166.8 145.9L164.8 147.2L162.7 148.6L160.7 149.9L158.6 151.3L156.5 152.5L154.4 153.8L152.3 155.0L150.1 156.2L148.0 157.3L145.8 158.5L143.6 159.5L141.4 160.5L139.2 161.5L137.0 162.5L134.8 163.3L132.5 164.2L130.2 165.0L128.0 165.7L125.7 166.3L123.4 166.9L121.0 167.5L118.7 168.0L116.3 168.4L113.9 168.7L111.6 169.0L109.2 169.2L106.8 169.4L104.4 169.5L102.0 169.5L99.5 169.5L97.1 169.3L94.7 169.2L92.3 168.9L90.0 168.6L87.6 168.2L85.2 167.8L82.9 167.3L80.6 166.7L78.3 166.1L76.0 165.4L73.8 164.6L71.5 163.7L69.4 162.8L67.2 161.9L65.1 160.8L63.0 159.7L61.0 158.6L58.9 157.3L57.0 156.0L55.1 154.7L53.2 153.3L51.3 151.8L49.6 150.3L47.8 148.8L46.1 147.2L44.5 145.5L42.9 143.8L41.4 142.1L39.9 140.3L38.5 138.5L37.2 136.7L35.9 134.8L34.7 132.9L33.5 131.0L32.5 129.0L31.4 127.0L30.5 125.0L29.6 123.0L28.8 121.0L28.0 118.9L27.3 116.8L26.7 114.7L26.2 112.6L25.7 110.4L25.3 108.2L25.0 106.0L24.7 103.8L24.5 101.6L24.4 99.3L24.3 97.1L24.3 94.8L24.4 92.5L24.6 90.3L24.8 88.0L25.1 85.7L25.5 83.5L25.9 81.2L26.4 79.0L27.0 76.8L27.7 74.5L28.4 72.4L29.3 70.2L30.1 68.1L31.1 66.0L32.2 63.9L33.3 61.9L34.5 59.8L35.7 57.9L37.0 55.9L38.4 54.0L39.9 52.2L41.4 50.3L43.0 48.6L44.6 46.9L46.3 45.2L48.0 43.6L49.8 42.0L51.7 40.5L53.6 39.1L55.5 37.7L57.5 36.4L59.6 35.1L61.6 34.0L63.7 32.9L65.9 31.9L68.1 30.9L70.3 30.0L72.5 29.2L74.8 28.5L77.1 27.8L79.4 27.3L81.8 26.8L84.1 26.3L86.5 25.9L88.9 25.6L91.3 25.4L93.7 25.2L96.1 25.1L98.5 25.1L100.9 25.1L103.3 25.2L105.7 25.3L108.1 25.6L110.5 25.8L112.8 26.1L115.2 26.5L117.5 27.0L119.8 27.4L122.2 28.0L124.5 28.6L126.7 29.2L129.0 29.9L131.3 30.6L133.5 31.4L135.7 32.3L138.0 33.1L140.2 34.1L142.3 35.0L144.5 36.0L146.6 37.1L148.8 38.2L150.9 39.3L153.0 40.4L155.1 41.6L157.1 42.9L159.2 44.1L161.2 45.4L163.2 46.8L165.2 48.1L167.2 49.5L169.1 50.9L171.1 52.4L173.0 53.9L174.9 55.4L176.8 56.9L178.7 58.4L180.5 60.0L182.3 61.6L184.2 63.2L186.0 64.9L187.7 66.5L189.5 68.2L191.2 69.9L193.0 71.6L194.7 73.3L196.3 75.0L198.0 76.8L199.7 78.6L201.3 80.3L202.9 82.1L204.5 83.9L206.1 85.8L207.7 87.6L209.3 89.4L210.9 91.3L212.4 93.2L214.0 95.0L215.6 96.9L217.1 98.8L218.7 100.7L220.3 102.6L221.8 104.5L223.4 106.5L225.0 108.4L226.6 110.3L228.1 112.2L229.7 114.1L231.4 116.0L233.0 118.0L234.6 119.9L236.3 121.8L237.9 123.7L239.6 125.6L241.3 127.4L243.0 129.3L244.8 131.2L246.5 133.0L248.3 134.8L250.1 136.7L251.9 138.4L253.7 140.2L255.6 142.0L257.4 143.7L259.3 145.5L261.2 147.2L263.1 148.9L265.0 150.5L266.9 152.2L268.8 153.8L270.8 155.4L272.7 157.0L274.7 158.6L276.7 160.2L278.7 161.7L280.7 163.3L282.7 164.8L284.8 166.3L286.8 167.7L288.9 169.2L290.9 170.6L293.0 172.0L295.1 173.4L297.2 174.8L299.3 176.1L301.4 177.5L303.5 178.8L305.7 180.0ZM263.6 172.7L264.8 174.6L266.1 176.3L267.6 177.8L269.3 179.0L271.1 179.9L273.0 180.6L274.9 181.1L276.9 181.3L278.8 181.2L280.6 180.9L282.4 180.4L284.1 179.8L285.8 179.0L287.3 178.1L288.8 177.2L290.3 176.2L291.7 175.2L293.0 174.1L294.4 173.1L295.7 172.0L296.9 171.0L298.2 170.0L299.5 168.9L300.8 167.9L302.0 166.9L303.3 165.8L304.5 164.8L305.8 163.8L307.0 162.7L308.2 161.7L309.5 160.6L310.7 159.6L311.9 158.5L313.1 157.4L314.3 156.3L315.4 155.2L316.6 154.0L317.8 152.9L318.9 151.7L320.1 150.6L321.2 149.4L322.3 148.1L323.4 146.9L324.5 145.6L325.6 144.3L326.6 143.0L327.6 141.7L328.6 140.3L329.5 139.0L330.5 137.6L331.3 136.1L332.2 134.7L332.9 133.2L333.7 131.7L334.4 130.1L335.0 128.5L335.6 126.9L336.1 125.3L336.6 123.6L337.0 121.9L337.3 120.1L337.4 118.3L337.4 116.5L337.2 114.7L336.6 113.0L335.8 111.3L334.5 109.7L333.0 108.4L331.0 107.2L329.1 111.4L330.4 112.1L331.4 112.8L332.1 113.7L332.6 114.6L333.0 115.7L333.2 116.9L333.3 118.2L333.3 119.7L333.1 121.1L332.8 122.7L332.4 124.2L332.0 125.7L331.5 127.2L330.9 128.7L330.3 130.1L329.7 131.6L329.0 133.0L328.2 134.3L327.4 135.7L326.6 137.0L325.7 138.3L324.8 139.6L323.8 140.8L322.8 142.1L321.8 143.3L320.7 144.5L319.6 145.6L318.5 146.7L317.4 147.9L316.2 148.9L315.0 150.0L313.9 151.0L312.7 152.0L311.4 153.0L310.2 154.0L309.0 155.0L307.7 155.9L306.4 156.9L305.2 157.8L303.9 158.7L302.6 159.6L301.3 160.5L300.0 161.5L298.6 162.4L297.3 163.3L296.0 164.2L294.6 165.1L293.3 166.1L291.9 167.0L290.5 168.0L289.2 169.0L287.9 169.9L286.5 170.8L285.3 171.7L284.0 172.4L282.7 173.1L281.5 173.7L280.3 174.1L279.2 174.5L278.1 174.7L276.9 174.7L275.8 174.7L274.6 174.5L273.5 174.2L272.3 173.7L271.2 173.1L270.1 172.3L269.0 171.3L268.0 170.1Z" fill="#000"/>
<g fill="#000" stroke="#000" stroke-linejoin="round" font-family="'Liberation Serif',serif" font-style="italic" font-weight="bold"><text transform="translate(295 188) skewX(-20.400) scale(1 1.78)" font-family="'Liberation Sans',sans-serif" font-style="normal" font-size="60" stroke-width="2.600">l</text><text transform="translate(322 184.600) rotate(4.400) scale(1.06 1.03)" font-size="62" stroke-width=".8" letter-spacing="-1.500">ove</text></g>
<rect x="10" y="19" width="442" height="171.500" fill="none" stroke="#8d8d8d" stroke-width="1.250"/>
<path d="M219 104h24M231 92v24" stroke="#bdbdbd" stroke-width=".8" opacity=".7"/>
<circle cx="464" cy="6" r="11" fill="#7499ca"/><path d="M459.800 7.500a4.300 4.300 0 1 0 1.400-4.400" fill="none" stroke="#fff" stroke-width="2.100"/><path d="M458.300 .8l.6 4.900 4.600-1.500z" fill="#fff"/>
<circle cx="464" cy="203.800" r="11" fill="#7499ca"/><path transform="translate(0 .8)" d="M459.500 198.500h4l-1.300 1.300 1.700 1.700-1.400 1.400-1.700-1.700-1.300 1.300zM468.500 207.500h-4l1.300-1.300-1.700-1.700 1.400-1.400 1.700 1.700 1.300-1.300z" fill="#fff"/>
<circle cx="-2" cy="203" r="11" fill="#7499ca"/>
</g>
<path d="M.5 .5H15.500V12.500a3 3 0 0 1-3 3H.5z" fill="#fbfbfd" stroke="#222" stroke-width="1"/>
<g opacity=".9" transform="translate(0 1)"><rect x="82.500" y="557.500" width="31" height="32" rx="2" fill="#eef0f4" fill-opacity=".55" stroke="#e4e6eb"/><rect x="88.500" y="572" width="19" height="3.600" fill="#d3d5da"/><rect x="172.500" y="557.500" width="31" height="32" rx="2" fill="#eef0f4" fill-opacity=".55" stroke="#e4e6eb"/><path d="M178.500 572h19v3.600h-19zM186.200 564.300h3.600v19h-3.600z" fill="#d3d5da"/><text x="143" y="578.500" text-anchor="middle" font-size="14" fill="#c6c8ce">100%</text></g>
</svg>
<!--CANVAS_END--></div>
<!-- vertical scrollbar -->
<div class="abs" style="left:995px;top:61px;width:15px;height:601px;background:linear-gradient(90deg,#fff 40%,#f1f1f1);border-left:1px solid #777;border-right:1px solid #777"></div>
<div class="abs" style="left:995px;top:61px;width:15px;height:17px;background:#fafafa;border:1px solid #8e8e8e;border-top:none"></div>
<svg class="abs" style="left:999px;top:66px" width="7.500" height="8" viewBox="0 0 9 9"><path d="M4.500 0L9 9H0z" fill="#222"/></svg>
<div class="abs" style="left:995px;top:379px;width:15px;height:267px;background:#c9c9c9;border:1px solid #777"></div>
<div class="abs" style="left:995px;top:645px;width:15px;height:17px;background:#fafafa;border:1px solid #8e8e8e"></div>
<svg class="abs" style="left:999px;top:650px" width="7.500" height="8" viewBox="0 0 9 9"><path d="M0 0h9L4.500 9z" fill="#222"/></svg>
<!-- horizontal scrollbar -->
<div class="abs" style="left:70px;top:661px;width:925px;height:15px;background:#fff;border-top:1px solid #8e8e8e;border-bottom:1px solid #8e8e8e"></div>
<div class="abs" style="left:70px;top:661px;width:18px;height:15px;background:#fafafa;border:1px solid #8e8e8e;border-left:none"></div>
<svg class="abs" style="left:75px;top:664.500px" width="8" height="8" viewBox="0 0 9 9"><path d="M0 4.500L9 0v9z" fill="#222"/></svg>
<div class="abs" style="left:578px;top:661px;width:402px;height:15px;background:#c9c9c9;border:1px solid #8e8e8e"></div>
<div class="abs" style="left:979px;top:661px;width:16px;height:15px;background:#fafafa;border:1px solid #8e8e8e"></div>
<svg class="abs" style="left:982px;top:664.500px" width="8" height="8" viewBox="0 0 9 9"><path d="M0 0l9 4.500L0 9z" fill="#222"/></svg>
<div class="abs" style="left:995px;top:662px;width:15px;height:14px;background:#fff"></div>
<!-- splitter -->
<div class="abs" style="left:1010px;top:61px;width:20px;height:616px;background:#f1f1f2"></div>
<div class="abs" style="left:1017.500px;top:359.800px;width:4.500px;height:4.500px;border-radius:50%;background:#111;box-shadow:0 6.500px 0 #111,0 13px 0 #111"></div>
  <div id="panel"><div id="phead">
<span style="position:absolute;top:8.500px;font-size:11.500px;font-weight:bold;line-height:14px;color:#fff;letter-spacing:-.45px;white-space:nowrap;left:13px">Layers</span><span style="position:absolute;top:8.500px;font-size:11.500px;font-weight:bold;line-height:14px;color:#fff;letter-spacing:-.45px;white-space:nowrap;left:83px">Edit</span><span style="position:absolute;top:8.500px;font-size:11.500px;font-weight:bold;line-height:14px;color:#fff;letter-spacing:-.45px;white-space:nowrap;left:143px">Sync</span><span style="position:absolute;top:8.500px;font-size:11.500px;font-weight:bold;line-height:14px;color:#fff;letter-spacing:-.45px;white-space:nowrap;left:199px">Canvas</span>
<div class="abs" style="left:12px;top:26px;width:40px;height:4px;background:#fff"></div>
<div class="abs" style="left:62px;top:29px;width:188px;height:1px;background:#aab6d6"></div>
<div class="abs" style="left:-7.5px;top:60px;width:60px;text-align:center;font-size:11px;font-weight:bold;line-height:14px;color:#727c92;letter-spacing:-.35px">Slice</div><svg class="abs" style="left:12px;top:37.500px" width="21" height="21" viewBox="0 0 21 21"><path d="M.5.500h13v6.500a7 7 0 0 0-6.500 6H.5z" fill="#727c92"/><circle cx="13.500" cy="13.500" r="6.300" fill="none" stroke="#727c92" stroke-width="1.600"/><path d="M7.500 7.500h6v6h-6z" fill="#727c92" opacity=".55"/><path d="M13.500 13.500v6.300a6.300 6.300 0 0 0 6.300-6.300z" fill="#727c92"/></svg>
<div class="abs" style="left:42.5px;top:60px;width:60px;text-align:center;font-size:11px;font-weight:bold;line-height:14px;color:#727c92;letter-spacing:-.35px">Weld</div><svg class="abs" style="left:62px;top:37.500px" width="21" height="21" viewBox="0 0 21 21"><path d="M.5.500h13.500v7a6.600 6.600 0 1 1-7 7H.5z" fill="#727c92"/></svg>
<div class="abs" style="left:92.5px;top:60px;width:60px;text-align:center;font-size:11px;font-weight:bold;line-height:14px;color:#727c92;letter-spacing:-.35px">Attach</div><svg class="abs" style="left:112px;top:37.500px" width="21" height="21" viewBox="0 0 21 21"><circle cx="10.500" cy="10.500" r="9.800" fill="#727c92"/><path d="M7.200 6.200l5.600 7.600a1.700 1.700 0 0 0 2.700-2L10.300 4.800a2.600 2.600 0 0 0-4.200 3l4.800 6.700" fill="none" stroke="#4c566a" stroke-width="1.300" stroke-linecap="round"/></svg>
<div class="abs" style="left:142.5px;top:60px;width:60px;text-align:center;font-size:11px;font-weight:bold;line-height:14px;color:#727c92;letter-spacing:-.35px">Flatten</div><svg class="abs" style="left:161px;top:37.500px" width="23" height="21" viewBox="0 0 23 21"><path d="M11.500 11l10 4.800-10 4.700-10-4.700z" fill="#727c92"/><path d="M6.500 8.200L1.500 10.600l10 4.700 10-4.700-5-2.400" fill="none" stroke="#727c92" stroke-width="1.300"/><path d="M9.800.500h3.400v5h2.800l-4.500 4.500L7 5.500h2.800z" fill="#727c92"/></svg>
<div class="abs" style="left:192.5px;top:60px;width:60px;text-align:center;font-size:11px;font-weight:bold;line-height:14px;color:#e3e7f3;letter-spacing:-.35px">Contour</div><svg class="abs" style="left:212px;top:37.500px" width="21" height="21" viewBox="0 0 21 21"><rect width="21" height="21" fill="#c9d0e5"/><circle cx="10.500" cy="10.500" r="6.800" fill="none" stroke="#4c566a" stroke-width="1.300" stroke-dasharray="3.200 2.100"/></svg>

</div>
<!-- layer group -->
<div class="abs" style="left:0;top:79px;width:248px;height:38px;background:linear-gradient(#f6f6f6,#ebebeb);border-right:1px solid #d8d8d8"></div>
<svg class="abs" style="left:15px;top:97px" width="12" height="8" viewBox="0 0 12 8"><path d="M0 .5h12L6 7.500z" fill="#222"/></svg>
<div class="abs" style="left:37px;top:90px;font-size:15.500px;line-height:18px;color:#3a3a3a;white-space:nowrap;letter-spacing:.55px">infinity-love</div>
<div class="abs" style="left:0;top:117px;width:248px;height:38px;background:#dfe3f0;box-shadow:0 1px 2px rgba(0,0,0,.25)"></div>
<div class="abs" style="left:16px;top:122px;width:29px;height:29px;background:#fff;border:1.500px solid #111"></div>
<svg class="abs" style="left:18px;top:129px" width="26" height="14" viewBox="0 0 26 14" fill="none" stroke="#111" stroke-width="1"><path d="M13 7C10 3 7.500 1.500 5 1.500 2.500 1.500 1 4 1 7s1.500 5.500 4 5.500c2.500 0 5-1.500 8-5.500s5.500-5 8-5c2.500 0 4 2.500 4 5.500 0 2.500-1 4.500-2.500 5.500M13 7c2 2.500 3.500 4 5 5"/><text x="17" y="12.500" font-size="5" font-style="italic" font-family="'Liberation Serif',serif" fill="#111" stroke="none">love</text></svg>
<svg class="abs" style="left:49px;top:125px" width="20" height="20" viewBox="0 0 20 20" fill="none" stroke="#555" stroke-width="1.100"><circle cx="10" cy="10" r="9"/><path d="M6.500 16.500L12 3.500M13.500 16.500L8 3.500"/><ellipse cx="6.800" cy="15.200" rx="1.400" ry="2" transform="rotate(25 6.800 15.200)"/><ellipse cx="13.200" cy="15.200" rx="1.400" ry="2" transform="rotate(-25 13.200 15.200)"/></svg>
<svg class="abs" style="left:205px;top:128.500px" width="18.500" height="12" viewBox="0 0 20 13"><path d="M1 6.500C4 2.500 7 1 10 1s6 1.500 9 5.500c-3 4-6 5.500-9 5.500s-6-1.500-9-5.500z" fill="#f4f5f9" stroke="#555" stroke-width="1.500"/><circle cx="10" cy="6.200" r="3.600" fill="#555"/><circle cx="8.800" cy="5" r="1.200" fill="#dfe3f0"/></svg>
<!-- bottom toolbar -->
<div class="abs" style="left:0;top:565px;width:250px;height:0;border-top:1px dotted #777"></div>
<div class="abs" style="left:0px;top:592px;width:60px;text-align:center;font-size:11px;line-height:14px;color:#c3c6cf;letter-spacing:-.1px">Group</div><svg class="abs" style="left:20px;top:570.300px" width="20" height="20" viewBox="0 0 20 20" fill="none" stroke="#c3c6cf"><rect x="2.500" y="2.500" width="15" height="15" stroke-dasharray="0" stroke-width="1"/><rect x="3" y="3" width="9.500" height="9.500" stroke-width="1.600"/><rect x="7.500" y="7.500" width="9.500" height="9.500" stroke-width="1"/><g fill="#c3c6cf" stroke="none"><rect x="0" y="0" width="3" height="3"/><rect x="16" y="0" width="3" height="3"/><rect x="0" y="16" width="3" height="3"/><rect x="16" y="16" width="3" height="3"/></g></svg>
<div class="abs" style="left:60px;top:592px;width:60px;text-align:center;font-size:11px;line-height:14px;color:#c3c6cf;letter-spacing:-.1px">UnGroup</div><svg class="abs" style="left:80px;top:570.300px" width="20" height="20" viewBox="0 0 20 20" fill="none" stroke="#c3c6cf"><rect x="2" y="2" width="10" height="10" stroke-width="1.500"/><rect x="7.500" y="7.500" width="11" height="11" stroke-width="1.500"/><g fill="#c3c6cf" stroke="none"><rect x="0" y="0" width="3" height="3"/><rect x="10.500" y="0" width="3" height="3"/><rect x="0" y="10.500" width="3" height="3"/></g></svg>
<div class="abs" style="left:120px;top:592px;width:60px;text-align:center;font-size:11px;line-height:14px;color:#3f4658;letter-spacing:-.1px">Delete</div><svg class="abs" style="left:141px;top:569px" width="18" height="21" viewBox="0 0 18 21" fill="none" stroke="#4c566a"><path d="M.5 3.500h17" stroke-width="1.400"/><path d="M6 3V1h6v2" stroke-width="1.200"/><path d="M2.500 5.500l1 12.500c.1 1.200.8 2 2 2h7c1.200 0 1.900-.8 2-2l1-12.500" stroke-width="1.300"/><path d="M6.300 8v9M9 8v9M11.700 8v9" stroke-width="1.700"/></svg>
<div class="abs" style="left:180px;top:592px;width:60px;text-align:center;font-size:11px;line-height:14px;color:#3f4658;letter-spacing:-.1px">Duplicate</div><svg class="abs" style="left:200px;top:569px" width="21" height="21" viewBox="0 0 21 21"><rect x="1" y="1.500" width="13" height="15.500" fill="#f8f9fb" stroke="#4c566a" stroke-width="1.150"/><path d="M4 6.500l2 2-2 2M4 11l1.500 1.500" fill="none" stroke="#4c566a" stroke-width="1.200"/><rect x="6" y="3.500" width="13.500" height="16" fill="#f8f9fb" stroke="#4c566a" stroke-width="1.150"/><path d="M12.800 6.800l1.400 3.100 3.400.3-2.600 2.200.8 3.300-3-1.800-3 1.800.8-3.300L8 10.200l3.400-.3z" fill="#4c566a"/></svg>
<div class="abs" style="left:0;top:610px;width:250px;height:8px;background:#4c566a"></div>
</div>
</div>
</body>
</html>
